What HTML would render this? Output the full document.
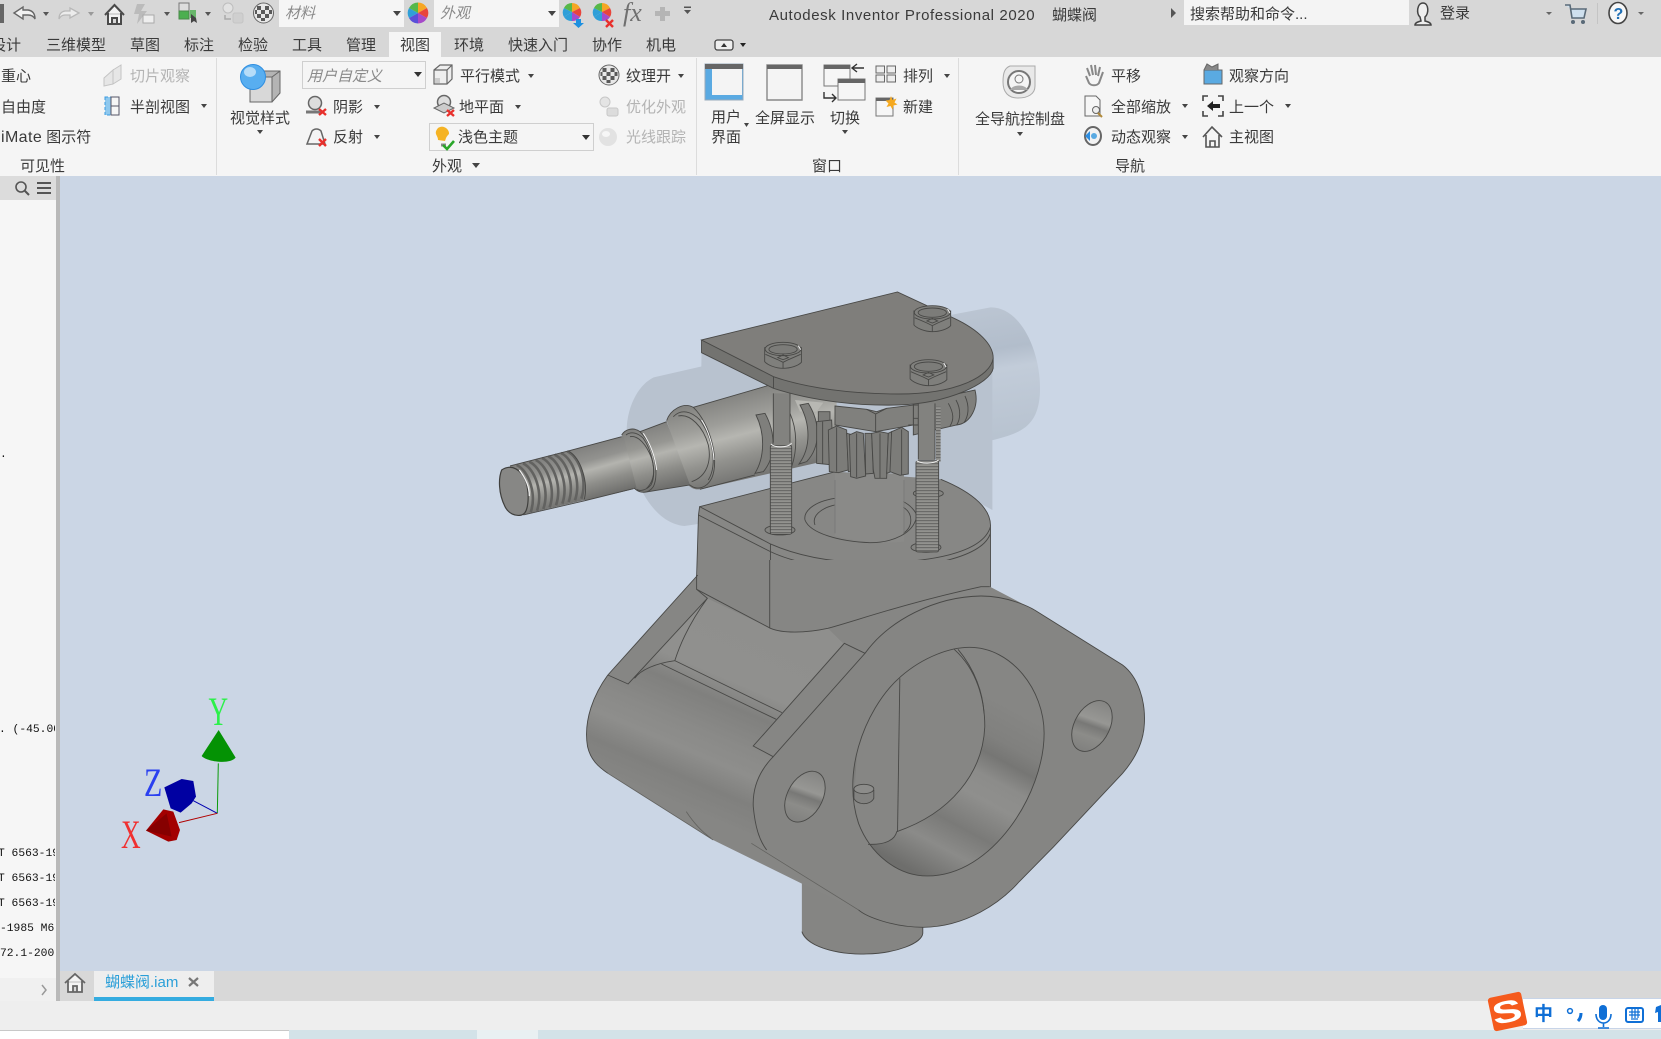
<!DOCTYPE html>
<html lang="zh">
<head>
<meta charset="utf-8">
<title>Autodesk Inventor Professional 2020</title>
<style>
html,body{margin:0;padding:0;width:1661px;height:1039px;overflow:hidden;background:#cbd6e5}
body{position:relative;font-family:"Liberation Sans","Noto Sans CJK SC",sans-serif;color:#333}
.b{position:absolute}
.t{position:absolute;white-space:nowrap;font-size:15px;line-height:20px;color:#3a3a3a}
.g{color:#b4b4b4}
.i{font-style:italic;color:#8a8a8a}
.m{position:absolute;font-family:"Liberation Mono",monospace;font-size:11.3px;line-height:14px;white-space:pre;color:#111}
svg{position:absolute;left:0;top:0;overflow:hidden}
svg *{vector-effect:non-scaling-stroke}
.e{fill:none;stroke:#484846;stroke-width:.9}
.e *{vector-effect:non-scaling-stroke}
</style>
</head>
<body>
<!-- chrome backgrounds -->
<div class="b" style="left:0;top:0;width:1661px;height:57px;background:#d7d7d7"></div>
<div class="b" style="left:0;top:57px;width:1661px;height:119px;background:#f5f5f5"></div>
<div class="b" style="left:389px;top:32px;width:52px;height:25px;background:#f5f5f5"></div>
<div class="b" style="left:216px;top:58px;width:1px;height:117px;background:#dcdcdc"></div>
<div class="b" style="left:696px;top:58px;width:1px;height:117px;background:#dcdcdc"></div>
<div class="b" style="left:958px;top:58px;width:1px;height:117px;background:#dcdcdc"></div>
<div class="b" style="left:279px;top:0;width:125px;height:27px;background:#f5f5f5"></div>
<div class="b" style="left:434px;top:0;width:125px;height:27px;background:#f5f5f5"></div>
<div class="b" style="left:1184px;top:0;width:225px;height:25px;background:#f4f4f4"></div>
<div class="b" style="left:302px;top:61px;width:122px;height:26px;border:1px solid #cfcfcf"></div>
<div class="b" style="left:429px;top:123px;width:163px;height:26px;border:1px solid #cfcfcf"></div>
<!-- left browser -->
<div class="b" style="left:0;top:176px;width:56px;height:825px;background:#f6f6f6"></div>
<div class="b" style="left:0;top:176px;width:56px;height:24px;background:#dcdcdc"></div>
<div class="b" style="left:56px;top:176px;width:4px;height:825px;background:#b9b9b9"></div>
<div class="b" style="left:0;top:978px;width:56px;height:23px;background:#f0f0f0"></div>
<!-- bottom -->
<div class="b" style="left:60px;top:971px;width:1601px;height:30px;background:#d8d8d8"></div>
<div class="b" style="left:94px;top:971px;width:120px;height:26px;background:#eeeeee"></div>
<div class="b" style="left:94px;top:997px;width:120px;height:4px;background:#35ace0"></div>
<div class="b" style="left:0;top:1001px;width:1661px;height:29px;background:#eeeeee"></div>
<div class="b" style="left:0;top:1030px;width:1661px;height:9px;background:#d3e2e8"></div>
<div class="b" style="left:477px;top:1030px;width:61px;height:9px;background:#e9f0f2"></div>
<div class="b" style="left:0;top:1030px;width:289px;height:9px;background:#fff;border-top:1px solid #c8c8c8;box-sizing:border-box"></div>
<div class="b" style="left:1523px;top:998px;width:138px;height:31px;background:#fff;border-top:1px solid #c7d4e8;border-bottom:1px solid #c7d4e8;box-sizing:border-box"></div>

<!-- 3D MODEL -->
<svg width="1661" height="1039" viewBox="0 0 1661 1039">
<defs>
<linearGradient id="sh" gradientUnits="userSpaceOnUse" x1="290" y1="165" x2="335" y2="325">
<stop offset="0" stop-color="#80807e"/><stop offset=".28" stop-color="#92928f"/><stop offset=".45" stop-color="#b4b4af"/><stop offset=".7" stop-color="#8e8e8a"/><stop offset="1" stop-color="#6c6c6a"/>
</linearGradient>
<linearGradient id="sh1" gradientUnits="userSpaceOnUse" x1="440" y1="115" x2="490" y2="305">
<stop offset="0" stop-color="#80807e"/><stop offset=".3" stop-color="#969692"/><stop offset=".46" stop-color="#b4b4af"/><stop offset=".72" stop-color="#8e8e8a"/><stop offset="1" stop-color="#6e6e6c"/>
</linearGradient>
<linearGradient id="sh2" gradientUnits="userSpaceOnUse" x1="610" y1="40" x2="675" y2="295">
<stop offset="0" stop-color="#82827f"/><stop offset=".3" stop-color="#9d9d99"/><stop offset=".48" stop-color="#b6b6b1"/><stop offset=".72" stop-color="#92928e"/><stop offset="1" stop-color="#747472"/>
</linearGradient>
<linearGradient id="gc" gradientUnits="userSpaceOnUse" x1="1300" y1="110" x2="1370" y2="500">
<stop offset="0" stop-color="#bcc6d3"/><stop offset=".35" stop-color="#b2bdcb"/><stop offset=".5" stop-color="#c2ccd9"/><stop offset="1" stop-color="#b8c3d0"/>
</linearGradient>
<linearGradient id="body" gradientUnits="userSpaceOnUse" x1="360" y1="130" x2="110" y2="640">
<stop offset="0" stop-color="#8f8f8d"/><stop offset=".3" stop-color="#90908e"/><stop offset=".42" stop-color="#80807e"/><stop offset=".6" stop-color="#8a8a88"/><stop offset=".72" stop-color="#8e8e8c"/><stop offset=".85" stop-color="#80807e"/><stop offset="1" stop-color="#868684"/>
</linearGradient>
<linearGradient id="bore" gradientUnits="userSpaceOnUse" x1="1240" y1="480" x2="950" y2="950">
<stop offset="0" stop-color="#868684"/><stop offset=".18" stop-color="#80807e"/><stop offset=".27" stop-color="#767674"/><stop offset=".38" stop-color="#8c8c8a"/><stop offset=".5" stop-color="#8f8f8d"/><stop offset=".68" stop-color="#7a7a78"/><stop offset=".82" stop-color="#8b8b89"/><stop offset="1" stop-color="#6e6e6c"/>
</linearGradient>
<linearGradient id="hole" x1="0" y1="0" x2="0" y2="1">
<stop offset="0" stop-color="#858583"/><stop offset=".38" stop-color="#979794"/><stop offset=".5" stop-color="#787876"/><stop offset=".7" stop-color="#8c8c89"/><stop offset="1" stop-color="#80807e"/>
</linearGradient>
<pattern id="scr" width="10" height="9" patternUnits="userSpaceOnUse">
<rect width="10" height="9" fill="#92928f"/><rect y="0" width="10" height="3.6" fill="#6a6a68"/>
</pattern>
<path id="arc" d="M0,0 C38,18 60,90 42,142" fill="none" stroke="#626260" stroke-width="2.6"/>
<g id="nut">
<path d="M-48,-22 L-48,20 C-40,30 -20,40 0,40 C20,40 40,32 48,22 L48,-22 Z" fill="#7f7f7c" stroke="#484846" stroke-width=".9"/>
<ellipse cx="0" cy="-18" rx="47" ry="20" fill="#80807d" stroke="#484846" stroke-width=".9"/>
<ellipse cx="0" cy="-17" rx="37" ry="14" fill="#7c7c79" stroke="#484846" stroke-width=".9"/>
<path d="M-46,-2 L-14,14 L0,22 L14,14 L46,-2 M0,22 V40 M-14,8 L0,14 L14,8 L0,0 Z" fill="none" stroke="#484846" stroke-width=".9"/>
<path d="M40,-28 L46,-16" stroke="#f0f0f0" stroke-width="1"/>
</g>
</defs>

<!-- ghost housing & block -->
<g transform="translate(470 270) scale(.3827 .3333)">
<path d="M1255,135 L1360,112 C1440,110 1495,250 1489,375 C1482,470 1440,490 1360,512 L1240,540 Z" fill="url(#gc)"/>
<path d="M1240,360 L1360,330 C1350,420 1320,510 1240,580 Z" fill="#a8b3c1" opacity=".5"/>
<path d="M480,322 L610,288 L610,760 L560,768 C480,760 425,640 412,520 C400,440 430,350 480,322 Z" fill="#b8c2cf"/>
<path d="M605,240 L1365,230 L1365,720 L1235,640 L600,720 Z" fill="#b8c2cf"/>
<path d="M600,710 L955,605 L1230,628 C1320,670 1362,720 1360,770 L1360,1000 L590,1000 L597,735 Z" fill="#878785"/>
</g>

<!-- shaft (origin 490,390, 3x) -->
<g transform="translate(490 390) scale(.3333)">
<path d="M530,92 C540,60 580,38 610,52 L1040,-75 L1040,205 L630,298 C612,300 600,292 590,280 Z" fill="url(#sh2)"/>
<path d="M395,135 C405,118 430,110 450,125 L530,95 L600,285 L470,306 C455,310 440,305 432,294 Z" fill="url(#sh1)"/>
<path d="M235,183 L400,138 L440,295 L285,332 Z" fill="url(#sh)"/>
<path d="M60,228 L235,183 C275,205 295,280 285,330 L95,375 Z" fill="url(#sh)"/>
<use href="#arc" x="80" y="225"/><use href="#arc" x="99" y="220"/><use href="#arc" x="118" y="215"/><use href="#arc" x="137" y="210"/><use href="#arc" x="156" y="204"/><use href="#arc" x="175" y="199"/><use href="#arc" x="194" y="194"/><use href="#arc" x="213" y="189"/><use href="#arc" x="232" y="184"/>
<g class="e">
<path d="M235,183 C275,205 295,280 283,328"/>
<path d="M60,228 L235,183 L395,140 M100,375 L285,332 L430,296" />
<path d="M395,135 C405,118 430,110 450,125 C490,165 510,250 490,290 C475,312 450,312 432,294"/>
<path d="M408,135 C425,122 445,130 460,145 C485,180 502,250 483,285 C470,300 450,305 440,298"/>
<path d="M420,140 C445,135 470,165 485,205 C497,245 490,275 470,295"/>
<path d="M450,125 L530,95 M470,306 L600,285"/>
<path d="M530,92 C540,60 580,35 610,52 C660,100 690,210 665,265 C650,295 620,302 600,285"/>
<path d="M550,80 C575,55 605,65 630,90 C665,140 685,220 655,270"/>
<path d="M565,78 C600,70 640,110 655,165 C665,215 650,260 605,275"/>
<path d="M610,52 L840,-15"/>
<path d="M630,298 L795,255"/>
</g>
<path d="M460,130 C480,160 495,200 500,240 M635,90 C655,120 670,170 672,210" fill="none" stroke="#f4f4f4" stroke-width="1"/>
<path d="M35,240 C25,265 25,310 45,350 C55,370 75,380 95,375 C115,370 120,320 108,275 C95,240 65,220 35,240 Z" fill="#878785" stroke="#3f3f3d" stroke-width="1.2"/>
<path d="M88,240 C105,262 118,290 118,318" fill="none" stroke="#f2f2f2" stroke-width="1.2"/>
</g>

<!-- block top lines -->
<g transform="translate(470 270) scale(.3827 .3333)" class="e">
<path d="M600,710 L955,605 M1230,628 C1320,670 1362,720 1360,770 C1340,850 1200,880 1030,878 C920,875 840,850 785,822 L600,710 L597,735 L785,845 C840,875 920,895 1030,895 C1200,897 1340,860 1360,790 L1360,770 M785,822 L785,1000 M597,735 L590,1000 M1360,770 L1360,1000"/>
</g>

<!-- gear area (origin 700,370, 3x) -->
<g transform="translate(700 370) scale(.3333)">
<path d="M405,310 H612 V515 C540,522 470,515 405,498 Z" fill="#8a8a88"/>
<g class="e">
<path d="M405,385 C340,395 310,425 315,450 C330,490 420,515 510,518 C580,518 640,490 650,440 C650,425 630,405 610,395"/>
<path d="M405,405 C360,415 335,440 345,465 M610,412 C640,430 640,470 610,490"/>
<path d="M405,330 V490 M612,330 V490" stroke="#7a7a78"/>
</g>
<!-- shell crescents -->
<path d="M285,90 L370,98 L350,125 L300,125 Z" fill="#b8b8b3"/>
<g stroke="#484846" stroke-width=".9" fill="#7f7f7c">
<path d="M168,135 L195,130 C228,190 228,260 190,305 L165,310 C195,260 195,190 168,135 Z"/>
<path d="M300,105 L325,100 C362,160 362,230 320,275 L297,282 C335,230 330,160 300,105 Z"/>
<path d="M270,130 C292,180 292,240 275,290" fill="none"/>
<path d="M640,100 L825,60 C838,110 812,160 770,165 L640,195 Z"/>
<path d="M745,100 C762,130 762,150 750,168 M768,90 C785,120 780,150 770,165 M795,78 C810,110 805,140 792,158" fill="none"/>
</g>
<!-- gear teeth -->
<g stroke="#484846" stroke-width=".9" fill="#7c7c79">
<path d="M355,125 L390,125 V155 L355,155 Z"/>
<path d="M350,155 L395,150 L400,285 L350,280 Z"/>
<path d="M385,180 L410,168 L440,180 L445,300 L415,308 L388,305 Z"/>
<path d="M440,190 L460,195 L460,305 L445,305 Z"/>
<path d="M448,195 L470,185 L490,190 L497,318 L470,325 L452,320 Z"/>
<path d="M495,190 L515,190 L520,310 L497,312 Z"/>
<path d="M515,190 L540,185 L565,190 L560,325 L525,325 L520,300 Z"/>
<path d="M565,190 L575,185 L575,305 L560,310 Z"/>
<path d="M575,185 L605,172 L625,185 L625,312 L600,316 L570,305 Z"/>
<path d="M410,172 V305 M470,190 V322 M540,190 V325 M605,178 V314 M368,155 V282" fill="none"/>
<path d="M405,108 L500,118 L530,125 L560,115 L640,105 L640,165 L527,185 L405,165 Z" fill="#80807d"/>
<path d="M527,130 V185 M500,118 L527,132 L560,115" fill="none"/>
<path d="M640,105 H655 M640,145 H655 V165 H625" fill="none"/>
</g>
<!-- screws -->
<g stroke="#484846" stroke-width=".9">
<ellipse cx="240" cy="480" rx="45" ry="15" fill="#848481"/>
<ellipse cx="685" cy="370" rx="45" ry="13" fill="#848481"/>
<ellipse cx="678" cy="532" rx="45" ry="15" fill="#848481"/>
<rect x="708" y="110" width="14" height="165" fill="url(#scr)" stroke="none"/>
<rect x="211" y="225" width="64" height="268" rx="6" fill="url(#scr)"/>
<rect x="220" y="70" width="50" height="155" fill="#82827f" stroke="none"/>
<path d="M220,70 V218 M270,70 V218" fill="none"/>
<path d="M213,222 C225,234 260,234 275,220" fill="none" stroke="#f0f0f0" stroke-width="1"/>
<rect x="648" y="272" width="68" height="274" rx="6" fill="url(#scr)"/>
<rect x="655" y="100" width="50" height="170" fill="#82827f" stroke="none"/>
<path d="M655,100 V268 M705,100 V268" fill="none"/>
<path d="M650,272 C665,282 700,282 716,270" fill="none" stroke="#f0f0f0" stroke-width="1"/>
</g>
</g>

<!-- top plate -->
<g transform="translate(470 270) scale(.3827 .3333)">
<path d="M605,210 L605,248 L793,355 C900,395 1020,408 1120,405 C1250,400 1360,340 1367,295 L1367,265 Z" fill="#737370" stroke="#484846" stroke-width=".9"/>
<path d="M605,210 L1117,66 L1265,145 C1330,180 1368,225 1367,265 C1360,320 1270,372 1120,372 C1000,372 880,355 793,320 Z" fill="#7f7e7b" stroke="#484846" stroke-width=".9"/>
<path d="M793,320 V355" fill="none" stroke="#484846" stroke-width=".9"/>
<use href="#nut" x="818" y="255"/>
<use href="#nut" x="1208" y="145"/>
<use href="#nut" x="1198" y="307"/>
</g>

<!-- zoom-4 space: lower body -->
<g transform="translate(560 560) scale(.3827 .3333)">
<path d="M632,960 L632,1120 C650,1170 750,1185 800,1182 C880,1180 945,1150 948,1120 L948,1090 Z" fill="#858583"/>
<path d="M632,1115 C650,1170 750,1185 800,1182 C880,1180 945,1150 948,1120 V1100" class="e"/>
<path d="M360,0 L360,45 L125,345 C90,400 60,480 72,560 C80,600 100,620 125,640 L400,840 L630,970 L780,1050 C830,1085 880,1102 950,1102 C1060,1100 1150,1030 1200,965 L1290,860 L1470,640 C1500,600 1525,550 1527,490 C1530,420 1510,350 1470,315 L1240,150 L1123,80 L1123,0 Z" fill="#868684"/>
<path d="M125,345 L178,372 L385,115 L550,205 C580,220 640,220 700,205 L740,250 L505,558 L557,590 C515,640 503,690 505,740 C510,800 520,840 540,870 L400,840 L125,640 C100,620 80,600 72,560 C60,480 90,400 125,345 Z" fill="url(#body)"/>
<path d="M360,0 H548 V205 L357,88 Z" fill="#868684"/>
<path d="M548,0 H1123 V80 L900,130 L700,205 C640,220 580,220 550,205 Z" fill="#868684"/>
<path d="M505,558 L743,250 L797,280 L557,590 Z" fill="#868684"/>
<path d="M797,280 C860,180 980,110 1100,108 C1180,108 1240,150 1240,150 L1470,315 C1510,350 1530,420 1527,490 C1525,550 1500,600 1470,640 L1290,860 L1200,965 C1150,1030 1060,1100 950,1102 C870,1102 800,1070 780,1050 L540,870 C520,840 510,800 505,740 C503,690 515,640 557,590 Z" fill="#858583"/>
<path d="M890,350 C950,290 1020,262 1070,262 C1180,262 1265,390 1265,520 C1265,700 1130,948 960,948 C880,948 810,880 780,790 C760,720 760,640 780,560 C800,480 840,400 890,350 Z" fill="url(#bore)"/>
<path d="M1030,268 C1090,330 1110,420 1110,500 C1105,640 1020,760 880,815 C875,840 850,855 805,853 C775,790 760,720 780,560 C800,480 840,400 890,350 C950,290 1000,272 1030,268 Z" fill="#868684"/>
<g class="e">
<path d="M890,350 C950,290 1020,262 1070,262 C1180,262 1265,390 1265,520 C1265,700 1130,948 960,948 C880,948 810,880 780,790 C760,720 760,640 780,560 C800,480 840,400 890,350 Z"/>
<path d="M1030,268 C1090,330 1110,420 1110,500 C1105,640 1020,760 880,815 C875,840 850,855 805,853"/>
<path d="M1040,268 C1085,330 1105,400 1108,460"/>
<path d="M888,355 L882,815"/>
<path d="M357,45 V88 L550,205 C580,220 640,220 700,205 C780,180 900,130 1100,80 L1123,80"/>
<path d="M548,0 V205 M125,345 L178,372 L385,115 L357,88 M195,355 C210,330 250,310 300,302 C320,230 350,170 385,115"/>
<path d="M265,312 L565,478 M300,302 L580,458"/>
<path d="M505,558 L743,250 L797,280 L557,590 Z"/>
<path d="M797,280 C860,180 980,110 1100,108 C1180,108 1240,150 1240,150"/>
<path d="M557,590 C515,640 503,690 505,740 C510,800 520,840 540,870"/>
<path d="M125,345 C90,400 60,480 72,560 C80,600 100,620 125,640"/>
<path d="M360,45 L125,345"/>
<path d="M1240,150 L1470,315 C1510,350 1530,420 1527,490 C1525,550 1500,600 1470,640 L1290,860 L1200,965 C1150,1030 1060,1100 950,1102 C870,1102 800,1070 780,1050"/>
</g>
<path d="M125,640 L400,840 M330,755 C350,790 370,815 395,835 M500,850 L780,1050" fill="none" stroke="#62625f" stroke-width=".8"/>
<ellipse cx="640" cy="710" rx="47" ry="80" transform="rotate(22 640 710)" fill="url(#hole)" stroke="#484846" stroke-width=".9"/>
<ellipse cx="1390" cy="498" rx="47" ry="80" transform="rotate(22 1390 498)" fill="url(#hole)" stroke="#484846" stroke-width=".9"/>
<path d="M768,688 V715 C775,735 810,738 820,715 V690" fill="#828280" stroke="#484846" stroke-width=".9"/>
<ellipse cx="794" cy="687" rx="26" ry="14" fill="#8c8c8a" stroke="#484846" stroke-width=".9"/>
</g>

<!-- axes -->
<g transform="translate(0 680) scale(.3333)">
<path d="M652,400 L655,250" stroke="#0a9a0a" stroke-width="1" fill="none"/>
<path d="M652,400 L580,362" stroke="#0000b0" stroke-width="1" fill="none"/>
<path d="M652,400 L537,428" stroke="#b00000" stroke-width="1" fill="none"/>
<path d="M656,150 L605,228 C620,245 690,255 707,233 Z" fill="#049204"/>
<path d="M493,322 L545,297 L580,303 L588,350 L575,370 L542,398 L512,385 Z" fill="#0000a2"/>
<path d="M438,452 L490,388 L520,395 L540,450 L530,480 L505,485 Z" fill="#a30000"/>
<path d="M438,452 L500,400 L515,470 Z" fill="#860000"/>
</g>
<text x="0" y="0" transform="translate(208.5 725) scale(.68 1)" font-family="Liberation Serif" font-size="40" fill="#2cf04a">Y</text>
<text x="0" y="0" transform="translate(144 796) scale(.75 1)" font-family="Liberation Serif" font-size="40" fill="#2a40f0">Z</text>
<text x="0" y="0" transform="translate(121 848) scale(.68 1)" font-family="Liberation Serif" font-size="40" fill="#f03030">X</text>

<!-- ICONS: toolbar -->
<rect x="0" y="4" width="4" height="19" fill="#666"/>
<path d="M14,13 L23,7 V10 H28 Q35,11 35,19 Q33,15 28,15 H23 V19 Z" fill="#f2f2f2" stroke="#666" stroke-width="1.4"/>
<path d="M79,13 L70,8 V11 H65 Q59,12 59,19 Q61,15 65,15 H70 V18 Z" fill="#ececec" stroke="#b8b8b8" stroke-width="1.3"/>
<g fill="#555"><path d="M43,12 h6 l-3,4z"/><path d="M88,12 h6 l-3,4z" fill="#999"/><path d="M164,12 h6 l-3,4z"/><path d="M205,12 h6 l-3,4z"/><path d="M393,11 h8 l-4,5z" fill="#444"/><path d="M548,11 h8 l-4,5z" fill="#444"/><path d="M684,10 h7 l-3.5,4z"/><rect x="684" y="6.5" width="7" height="1.5"/></g>
<path d="M105,15 L114.500,5 L124,15 M108,13 V24 H121 V13 M112,24 V18 H117 V24" fill="#f4f4f4" stroke="#4a4a4a" stroke-width="2"/>
<path d="M137,4 L145,4 L141,11 L147,11 L137,24 L139,14 L134,14 Z" fill="#bbb"/><rect x="143" y="15" width="11" height="8" fill="#eee" stroke="#aaa"/>
<rect x="179" y="3" width="10" height="9" fill="#ddd" stroke="#777"/><rect x="179" y="11" width="10" height="8" fill="#4caf50" stroke="#4a8a4a"/><rect x="190" y="10" width="6" height="8" fill="#4caf50" opacity=".8"/><path d="M191,14 L191,23 L194,21 L197,23 L196,18 Z" fill="#444"/>
<circle cx="228" cy="8" r="5" fill="#e2e2e2" stroke="#bdbdbd"/><rect x="233" y="13" width="10" height="10" rx="2" fill="#cfcfcf" stroke="#c4c4c4"/><path d="M225,15 V19 H231" stroke="#aaa" stroke-width="1.5" fill="none"/>
<g id="ball"><circle cx="263.500" cy="13" r="10" fill="#e8e8e8" stroke="#666"/><g fill="#5a5a5a"><rect x="257" y="6" width="4" height="4"/><rect x="265" y="6" width="4" height="4"/><rect x="261" y="10" width="4" height="4"/><rect x="269" y="10" width="3" height="4"/><rect x="255" y="10" width="2" height="4"/><rect x="257" y="14" width="4" height="4"/><rect x="265" y="14" width="4" height="4"/><rect x="261" y="18" width="4" height="3"/></g></g>
<!-- color wheels -->
<g id="w1"><path d="M418,13 V2.500 A10.500,10.500 0 0 1 427,8z" fill="#f6a623"/><path d="M418,13 L427,8 A10.500,10.500 0 0 1 427,18z" fill="#e8453c"/><path d="M418,13 L427,18 A10.500,10.500 0 0 1 418,23.500z" fill="#a64ac9"/><path d="M418,13 V23.500 A10.500,10.500 0 0 1 409,18z" fill="#5a4fd8"/><path d="M418,13 L409,18 A10.500,10.500 0 0 1 409,8z" fill="#2f9fd8"/><path d="M418,13 L409,8 A10.500,10.500 0 0 1 418,2.500z" fill="#56b848"/></g>
<g><path d="M572,12 V3 A9,9 0 0 1 580,8z" fill="#f6a623"/><path d="M572,12 L580,8 A9,9 0 0 1 580,17z" fill="#e8453c"/><path d="M572,12 L580,17 A9,9 0 0 1 572,21z" fill="#a64ac9"/><path d="M572,12 V21 A9,9 0 0 1 564,17z" fill="#2f9fd8"/><path d="M572,12 L564,17 A9,9 0 0 1 564,8z" fill="#2f9fd8"/><path d="M572,12 L564,8 A9,9 0 0 1 572,3z" fill="#56b848"/><path d="M576,19 H581 V23 H584 L578.500,28 L573,23 H576Z" fill="#1e90e0"/></g>
<g><path d="M602,12 V3 A9,9 0 0 1 610,8z" fill="#f6a623"/><path d="M602,12 L610,8 A9,9 0 0 1 610,17z" fill="#e8453c"/><path d="M602,12 L610,17 A9,9 0 0 1 602,21z" fill="#a64ac9"/><path d="M602,12 V21 A9,9 0 0 1 594,17z" fill="#2f9fd8"/><path d="M602,12 L594,17 A9,9 0 0 1 594,8z" fill="#2f9fd8"/><path d="M602,12 L594,8 A9,9 0 0 1 602,3z" fill="#56b848"/><path d="M606,20 L613,27 M613,20 L606,27" stroke="#e8302c" stroke-width="2.4"/></g>
<text x="623" y="21" font-family="Liberation Serif" font-size="26" font-style="italic" fill="#707070">fx</text>
<path d="M660,7 h5 v4 h5 v5 h-5 v5 h-5 v-5 h-5 v-5 h5z" fill="#b5b5b5"/>
<path d="M1171,8 L1176,13 L1171,18 Z" fill="#555"/>
<!-- person, cart, help -->
<path d="M1421,21 C1417,22 1415,23 1415,25 H1431 C1431,23 1429,22 1425,21 V17 C1429,14 1429,3 1423,3 C1417,3 1416,14 1420,17 Z" fill="#eee" stroke="#444" stroke-width="1.5"/>
<path d="M1546,12 h6 l-3,3z" fill="#666"/><path d="M1638,12 h6 l-3,3z" fill="#666"/>
<path d="M1565,5 L1570,5 L1572,18 H1584 L1586,9 H1571" fill="#cfe0ee" stroke="#5a6a78" stroke-width="1.6"/><circle cx="1573" cy="22" r="2" fill="#5a6a78"/><circle cx="1583" cy="22" r="2" fill="#5a6a78"/>
<rect x="1597" y="3" width="1" height="21" fill="#c4c4c4"/>
<ellipse cx="1618" cy="13" rx="9" ry="10.500" fill="#f8f8f8" stroke="#444" stroke-width="1.6"/>
<text x="1613.500" y="19" font-family="Liberation Sans" font-size="16" font-weight="bold" fill="#1f6fb5">?</text>
<!-- panel toggle -->
<rect x="715" y="40" width="18" height="10" rx="2.500" fill="#eee" stroke="#444" stroke-width="1.3"/><path d="M721,47 h6 l-3,-4z" fill="#333"/><path d="M740,43 h6 l-3,4z" fill="#222"/>

<!-- ICONS: ribbon left -->
<path d="M104,78 L113,70 V84 L104,86 Z M113,70 L121,65 V79 L113,84 Z" fill="#e6e6e6" stroke="#c4c4c4"/>
<rect x="105" y="97" width="6" height="18" fill="#8ec8ee" stroke="#3a9ae0" stroke-dasharray="3 2"/><rect x="111" y="97" width="8" height="18" fill="#f6f6f6" stroke="#556"/><path d="M111,106 H119" stroke="#556"/>
<path d="M201,104 h6 l-3,4z" fill="#444"/>
<!-- visual style -->
<path d="M250,77 L262,71 H280 V93 L272,102 H250 Z" fill="#b4b4b4" stroke="#666"/><path d="M250,77 H272 V102 H250 Z" fill="#d8d8d8" stroke="#666"/><path d="M272,77 L280,71" stroke="#666"/>
<circle cx="253" cy="77" r="12.500" fill="#58aef0" stroke="#2f8ee0"/><ellipse cx="250" cy="72" rx="6" ry="5" fill="#b6dcf8"/>
<path d="M257,130 h6 l-3,4z" fill="#444"/>
<path d="M414,72 h8 l-4,5z" fill="#333"/><path d="M582,135 h8 l-4,5z" fill="#333"/>
<!-- shadow, reflection -->
<circle cx="315" cy="103" r="6.500" fill="#ddd" stroke="#666" stroke-width="1.500"/><path d="M306,112 H322" stroke="#777" stroke-width="3"/><path d="M319,109 L326,115 M326,109 L319,115" stroke="#e8302c" stroke-width="2.400"/>
<path d="M307,144 L312,131 A6,6 0 0 1 321,131 L325,144 Z" fill="#f4f4f4" stroke="#666" stroke-width="1.500"/><path d="M319,139 L326,146 M326,139 L319,146" stroke="#e8302c" stroke-width="2.400"/>
<path d="M374,105 h6 l-3,4z M374,135 h6 l-3,4z M528,74 h6 l-3,4z M515,105 h6 l-3,4z M678,74 h6 l-3,4z" fill="#444"/>
<!-- parallel cube -->
<path d="M434,70 L440,65 H452 V79 L447,84 H434 Z" fill="#eee" stroke="#666" stroke-width="1.200"/><path d="M434,70 H447 V84 M447,70 L452,65" fill="none" stroke="#666" stroke-width="1.200"/><rect x="435" y="78" width="5" height="5" fill="#ccc"/>
<!-- ground plane -->
<circle cx="444" cy="102" r="6.500" fill="#ddd" stroke="#666" stroke-width="1.500"/><path d="M434,108 L444,113 L454,108 L444,103 Z" fill="#ccc" stroke="#666"/><path d="M447,110 L454,116 M454,110 L447,116" stroke="#e8302c" stroke-width="2.400"/>
<!-- bulb -->
<path d="M438,140 C438,135 433,134 438,128 A7,7 0 0 1 449,134 C446,137 446,138 445,141 Z" fill="#f5b324"/><path d="M441,145 h5" stroke="#888" stroke-width="3"/><path d="M443,145 L447,149 L454,141" stroke="#2aa62a" stroke-width="2.600" fill="none"/>
<!-- texture -->
<g transform="translate(345.500 62)"><circle cx="263.500" cy="13" r="10" fill="#e8e8e8" stroke="#666"/><g fill="#5a5a5a"><rect x="257" y="6" width="4" height="4"/><rect x="265" y="6" width="4" height="4"/><rect x="261" y="10" width="4" height="4"/><rect x="269" y="10" width="3" height="4"/><rect x="255" y="10" width="2" height="4"/><rect x="257" y="14" width="4" height="4"/><rect x="265" y="14" width="4" height="4"/><rect x="261" y="18" width="4" height="3"/></g></g>
<circle cx="605" cy="102" r="5" fill="#e4e4e4" stroke="#c8c8c8"/><rect x="607" y="108" width="11" height="8" rx="2" fill="#dcdcdc" stroke="#c8c8c8"/>
<circle cx="608" cy="137" r="9" fill="#e2e2e2"/><ellipse cx="606" cy="134" rx="4" ry="3" fill="#f6f6f6"/>
<path d="M472,163 h8 l-4,5z" fill="#444"/>

<!-- ICONS: window -->
<rect x="705" y="64" width="38" height="36" fill="#5aaae2" stroke="#9ab"/><rect x="705" y="64" width="38" height="5" fill="#666"/><rect x="712" y="69" width="30" height="26" fill="#f4f4f4"/>
<rect x="767" y="65" width="35" height="35" fill="#f4f4f4" stroke="#888" stroke-width="1.400"/><rect x="767" y="65" width="35" height="4" fill="#666"/>
<rect x="824" y="65" width="26" height="21" fill="#f6f6f6" stroke="#777"/><rect x="824" y="65" width="26" height="4" fill="#666"/><rect x="838" y="79" width="27" height="21" fill="#f6f6f6" stroke="#777"/><rect x="838" y="79" width="27" height="4" fill="#666"/>
<path d="M864,68 H853 M857,64 L852,68 L857,72 M824,92 V98 H836 M832,94 L836,98 L832,102" fill="none" stroke="#333" stroke-width="1.400"/>
<path d="M744,123 h5 l-2.500,4z M842,130 h6 l-3,4z M944,74 h6 l-3,4z M1017,132 h6 l-3,4z M1182,104 h6 l-3,4z M1182,135 h6 l-3,4z M1285,104 h6 l-3,4z" fill="#444"/>
<rect x="876" y="66" width="8.500" height="7" fill="#eee" stroke="#666"/><rect x="887" y="66" width="8.500" height="7" fill="#eee" stroke="#666"/><rect x="876" y="75" width="8.500" height="7" fill="#eee" stroke="#666"/><rect x="887" y="75" width="8.500" height="7" fill="#eee" stroke="#666"/>
<rect x="876" y="98" width="17" height="18" fill="#f6f6f6" stroke="#777"/><rect x="876" y="98" width="17" height="3" fill="#666"/>
<path d="M891,96 l1.500,4 4,-1.500 -2,4 3,2 -4,1 -1,4 -2,-3.500 -4,1 2,-3.500 -3,-3 4,-.5z" fill="#f5a920"/>

<!-- ICONS: navigation -->
<path d="M1010,66 H1035 V86 C1035,94 1028,98 1018,98 C1008,98 1003,92 1003,82 C1003,72 1005,68 1010,66 Z" fill="#e9e9e9" stroke="#aaa"/><circle cx="1019" cy="82" r="11" fill="#f5f5f5" stroke="#777" stroke-width="2"/><circle cx="1019" cy="79" r="4" fill="#f5f5f5" stroke="#777"/><path d="M1010,90 C1013,84 1025,84 1028,90" fill="#aaa"/>
<path d="M1086,76 L1089,83 C1091,86 1097,86 1099,83 L1103,72 M1087,68 L1090,76 M1091,65 L1093,75 M1095,65 L1096,75 M1100,67 L1098,76" fill="none" stroke="#888" stroke-width="2"/>
<path d="M1085,96 H1096 L1100,100 V116 H1085 Z" fill="#f6f6f6" stroke="#666"/><circle cx="1096" cy="110" r="3.500" fill="#eee" stroke="#666"/><path d="M1098,113 L1102,117" stroke="#b0893a" stroke-width="2"/>
<ellipse cx="1093" cy="136" rx="8" ry="9" fill="#f2f2f2" stroke="#666" stroke-width="2"/><path d="M1085,136 L1090,131 V141 Z" fill="#2f8ee0"/><circle cx="1094" cy="136" r="3" fill="#5aaae2"/>
<path d="M1204,70 H1222 V84 H1204 Z" fill="#5aaae2" stroke="#666"/><path d="M1204,70 L1207,64 L1212,67 L1218,64 V70" fill="#888" stroke="#666"/>
<path d="M1203,101 V96 H1208 M1218,96 H1223 V101 M1203,111 V116 H1208 M1218,116 H1223 V111" fill="none" stroke="#444" stroke-width="1.600"/><path d="M1207,106 L1213,101 V104 H1220 V108 H1213 V111 Z" fill="#222"/>
<path d="M1203,137 L1212,127 L1222,137 M1206,135 V147 H1219 V135 M1210,147 V141 H1215 V147" fill="#f4f4f4" stroke="#555" stroke-width="1.600"/>

<!-- browser header & tabs icons -->
<circle cx="21" cy="187" r="5" fill="none" stroke="#555" stroke-width="1.600"/><path d="M25,191 L29,195" stroke="#555" stroke-width="2"/>
<path d="M37,183 H51 M37,188 H51 M37,193 H51" stroke="#555" stroke-width="2"/>
<path d="M42,985 L46,990 L42,995" fill="none" stroke="#999" stroke-width="1.500"/>
<path d="M65,983 L75,974 L85,983 M68,981 V992 H82 V981 M73,992 V986 H77 V992" fill="#f4f4f4" stroke="#666" stroke-width="1.800"/>
<path d="M189,978 L198,986 M198,978 L189,986" stroke="#777" stroke-width="2.200"/>

<!-- IME -->
<g transform="rotate(-12 1507.500 1011.500)"><rect x="1490.500" y="994.500" width="34" height="34" rx="3" fill="#f55a1c"/></g>
<text x="1534" y="1020" font-family="Liberation Sans,Noto Sans CJK SC" font-size="19" font-weight="bold" fill="#0f6fd6">中</text>
<circle cx="1570" cy="1011" r="2.400" fill="none" stroke="#0f6fd6" stroke-width="1.500"/><path d="M1581,1013 C1581,1017 1580,1019 1578,1021" stroke="#0f6fd6" stroke-width="3" fill="none"/>
<rect x="1599" y="1005" width="8" height="15" rx="4" fill="#0f6fd6"/><path d="M1596,1014 C1596,1026 1611,1026 1611,1014 M1603.500,1023 V1027 M1598,1028 H1609" fill="none" stroke="#0f6fd6" stroke-width="1.600"/>
<rect x="1626" y="1008" width="17" height="14" rx="2" fill="#fff" stroke="#0f6fd6" stroke-width="2"/><path d="M1629,1012 h11 M1629,1015 h11 M1631,1019 h7 M1632,1009 v9 M1635,1009 v9 M1638,1009 v9" stroke="#0f6fd6" stroke-width="1.200"/>
<path d="M1656,1007 L1661,1005 V1022 H1658 V1012 L1655,1013 Z" fill="#0f6fd6"/>
</svg>

<div class="t" style="left:1495px;top:994px;font-size:36px;line-height:36px;font-weight:bold;color:#fff;transform:rotate(-12deg) scale(1.25,.85)">S</div>

<!-- tabs -->
<div class="t" style="left:-9px;top:36px">设计</div>
<div class="t" style="left:46px;top:36px">三维模型</div>
<div class="t" style="left:130px;top:36px">草图</div>
<div class="t" style="left:184px;top:36px">标注</div>
<div class="t" style="left:238px;top:36px">检验</div>
<div class="t" style="left:292px;top:36px">工具</div>
<div class="t" style="left:346px;top:36px">管理</div>
<div class="t" style="left:400px;top:36px">视图</div>
<div class="t" style="left:454px;top:36px">环境</div>
<div class="t" style="left:508px;top:36px">快速入门</div>
<div class="t" style="left:592px;top:36px">协作</div>
<div class="t" style="left:646px;top:36px">机电</div>

<!-- title row -->
<div class="t i" style="left:285px;top:4px">材料</div>
<div class="t i" style="left:440px;top:4px">外观</div>
<div class="t" style="left:769px;top:6px;font-size:15px;letter-spacing:.6px">Autodesk Inventor Professional 2020</div>
<div class="t" style="left:1052px;top:6px">蝴蝶阀</div>
<div class="t" style="left:1190px;top:5px">搜索帮助和命令...</div>
<div class="t" style="left:1440px;top:4px">登录</div>

<!-- ribbon -->
<div class="t" style="left:1px;top:67px">重心</div>
<div class="t" style="left:1px;top:98px">自由度</div>
<div class="t" style="left:1px;top:128px"><span style="font-size:16px;letter-spacing:.4px">iMate</span> 图示符</div>
<div class="t" style="left:20px;top:157px">可见性</div>
<div class="t g" style="left:130px;top:67px">切片观察</div>
<div class="t" style="left:130px;top:98px">半剖视图</div>
<div class="t" style="left:230px;top:109px">视觉样式</div>
<div class="t i" style="left:307px;top:67px">用户自定义</div>
<div class="t" style="left:333px;top:98px">阴影</div>
<div class="t" style="left:333px;top:128px">反射</div>
<div class="t" style="left:460px;top:67px">平行模式</div>
<div class="t" style="left:459px;top:98px">地平面</div>
<div class="t" style="left:458px;top:128px">浅色主题</div>
<div class="t" style="left:626px;top:67px">纹理开</div>
<div class="t g" style="left:626px;top:98px">优化外观</div>
<div class="t g" style="left:626px;top:128px">光线跟踪</div>
<div class="t" style="left:432px;top:157px">外观</div>
<div class="t" style="left:711px;top:108px">用户</div>
<div class="t" style="left:711px;top:128px">界面</div>
<div class="t" style="left:755px;top:109px">全屏显示</div>
<div class="t" style="left:830px;top:109px">切换</div>
<div class="t" style="left:903px;top:67px">排列</div>
<div class="t" style="left:903px;top:98px">新建</div>
<div class="t" style="left:812px;top:157px">窗口</div>
<div class="t" style="left:975px;top:110px">全导航控制盘</div>
<div class="t" style="left:1111px;top:67px">平移</div>
<div class="t" style="left:1111px;top:98px">全部缩放</div>
<div class="t" style="left:1111px;top:128px">动态观察</div>
<div class="t" style="left:1229px;top:67px">观察方向</div>
<div class="t" style="left:1229px;top:98px">上一个</div>
<div class="t" style="left:1229px;top:128px">主视图</div>
<div class="t" style="left:1115px;top:157px">导航</div>

<!-- browser tree text -->
<div class="b" style="left:0;top:200px;width:55px;height:778px;overflow:hidden">
<div class="m" style="left:0;top:248px">.</div>
<div class="m" style="left:-1px;top:523px">. (-45.00</div>
<div class="m" style="left:-2px;top:647px">T 6563-19</div>
<div class="m" style="left:-2px;top:672px">T 6563-19</div>
<div class="m" style="left:-2px;top:697px">T 6563-19</div>
<div class="m" style="left:0;top:722px">-1985 M6</div>
<div class="m" style="left:0;top:747px">72.1-200</div>
</div>

<!-- doc tab -->
<div class="t" style="left:105px;top:973px;font-size:15px;color:#2a9fd8">蝴蝶阀.iam</div>
</body>
</html>
